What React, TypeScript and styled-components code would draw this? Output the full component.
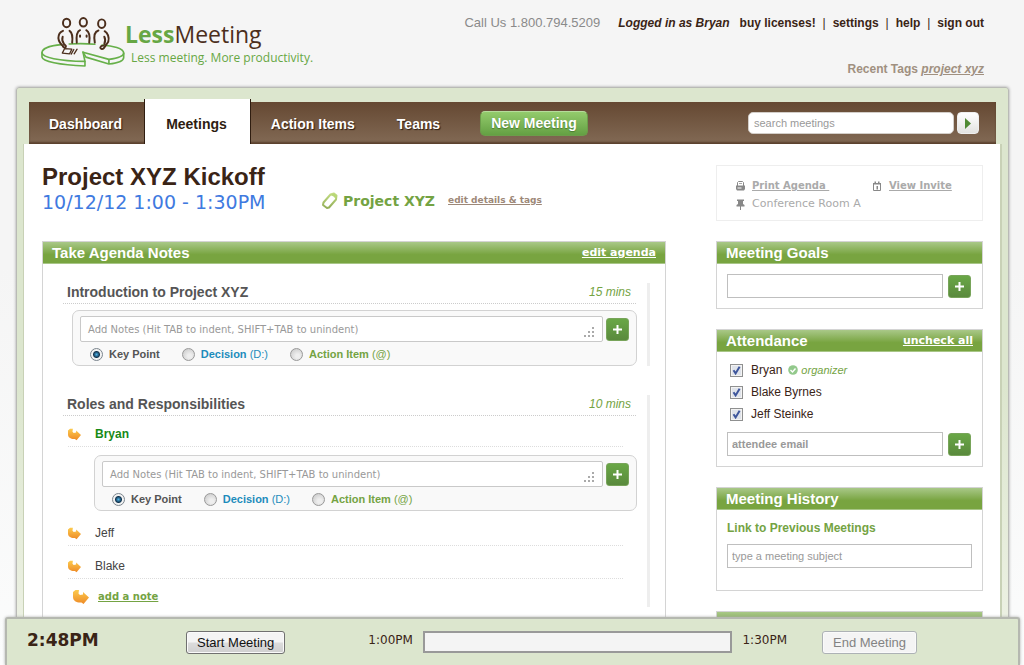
import React from "react";
import styled, { createGlobalStyle, css } from "styled-components";

const arial = `"Liberation Sans", Arial, sans-serif`;
const verdana = `"DejaVu Sans", Verdana, sans-serif`;

const GlobalStyle = createGlobalStyle`
  *, *::before, *::after { box-sizing: border-box; }
  body { margin: 0; background: #f5f5f5; font-family: ${arial}; font-size: 12px; color: #3a2416; }
  a { color: inherit; }
  input, textarea, button { font-family: inherit; margin: 0; }
  h1, h2, h3, p { margin: 0; padding: 0; }
`;

const Screen = styled.div`
  height: 100vh;
  display: flex;
  flex-direction: column;
  background: linear-gradient(#f5f5f5 40%, #fbfcfc);
`;

const Scroller = styled.div`
  flex: 1;
  min-height: 0;
  overflow-y: auto;
  scrollbar-width: none;
  padding: 0 15px 0 16px;
`;

/* ---------- header ---------- */

const Header = styled.header`
  display: flex;
  justify-content: space-between;
  height: 87px;
  padding: 15px 25px 0 25px;
`;

const Brand = styled.a`
  display: flex;
  height: 54px;
  text-decoration: none;
  font-family: "Open Sans", "Noto Sans", sans-serif;
`;

const BrandText = styled.div`
  padding-top: 3px;
`;

const BrandName = styled.div`
  font-size: 23px;
  font-weight: 500;
  line-height: 32px;
  color: #4b2e1c;
  b { color: #67a744; font-weight: 700; }
`;

const BrandTag = styled.div`
  padding-left: 6px;
  font-size: 12px;
  line-height: 16px;
  color: #67a744;
`;

const HeaderSide = styled.div`
  display: flex;
  flex-direction: column;
  align-items: flex-end;
  gap: 30px;
`;

const TopLinks = styled.div`
  display: flex;
  align-items: center;
  font-weight: bold;
  line-height: 16px;
  a { text-decoration: none; }
`;

const Phone = styled.span`
  margin-right: 18px;
  font-size: 13px;
  font-weight: normal;
  color: #8a8a8a;
`;

const LoggedIn = styled.em`
  margin-right: 10px;
`;

const Divider = styled.span`
  width: 17px;
  text-align: center;
  font-weight: normal;
`;

const RecentTags = styled.div`
  font-weight: bold;
  line-height: 16px;
  color: #a09080;
  a { font-style: italic; }
`;

/* ---------- frame and navigation ---------- */

const Frame = styled.div`
  border: 1px solid #b9bab6;
  border-radius: 3px 3px 0 0;
  box-shadow: 0 0 3px #999;
  padding: 14px 6px 0;
  background: linear-gradient(#dce6ce 50%, #f0f3e8 100%);
`;

const Nav = styled.nav`
  display: flex;
  align-items: center;
  height: 42px;
  margin: 0 6px;
  background: linear-gradient(#654832, #826a55);
  box-shadow: inset 0 -2px 2px #5a412d;
  font-size: 14px;
  font-weight: bold;
`;

const Tab = styled.a<{ $active?: boolean }>`
  padding: 2px 22px 0 20px;
  line-height: 42px;
  color: #fff;
  text-decoration: none;
  text-shadow: 1px 1px 1px #2f1d10;
  ${(p) =>
    p.$active &&
    css`
      align-self: flex-end;
      height: 45px;
      padding: 4px 23px 0 21px;
      border: solid #2f1d10;
      border-width: 0 1px;
      background: #fff;
      color: #2e1d12;
      text-shadow: none;
    `}
`;

const NewMeeting = styled.button`
  height: 25px;
  margin-left: 18px;
  padding: 0 10px;
  border: 1px solid #6c9d4b;
  border-top-color: #b5dc9b;
  border-radius: 5px;
  background: linear-gradient(#93cb6c, #64a043);
  color: #fff;
  font-size: 14px;
  font-weight: bold;
  text-shadow: 0 1px 1px #4c7a30;
`;

const SearchForm = styled.form`
  display: flex;
  align-items: center;
  gap: 3px;
  margin: 0 17px 0 auto;
`;

const SearchBox = styled.input`
  width: 206px;
  height: 22px;
  padding: 0 5px;
  border: 1px solid #d3cec9;
  border-radius: 5px;
  background: #fff;
  font-size: 11px;
  &::placeholder { color: #999; opacity: 1; }
`;

const SearchGo = styled.button`
  display: flex;
  align-items: center;
  justify-content: center;
  width: 22px;
  height: 22px;
  padding: 0;
  border: 1px solid #eee;
  border-radius: 4px;
  background: linear-gradient(#fff, #e2e2e0);
`;

/* ---------- page ---------- */

const Sheet = styled.main`
  display: flex;
  align-items: flex-start;
  gap: 50px;
  border: solid #c8d1b6;
  border-width: 0 2px 0 1px;
  padding: 21px 17px 30px 18px;
  background: #fff;
`;

const MainColumn = styled.div`
  flex: 1;
  min-width: 0;
`;

const SideColumn = styled.aside`
  display: flex;
  flex-direction: column;
  gap: 20px;
  width: 267px;
`;

const TitleRow = styled.div`
  display: flex;
  align-items: flex-end;
  margin-bottom: 26px;
`;

const TitleBlock = styled.div`
  width: 279px;
`;

const Title = styled.h1`
  font-size: 24px;
  font-weight: bold;
  line-height: 24px;
`;

const When = styled.p`
  font-family: ${verdana};
  font-size: 19px;
  line-height: 26px;
  color: #3f7ae0;
`;

const ProjectTag = styled.span`
  display: flex;
  align-items: center;
  gap: 5px;
  font-family: ${verdana};
  font-size: 14px;
  font-weight: bold;
  line-height: 28px;
  color: #74a343;
`;

const EditDetails = styled.a`
  margin-left: 13px;
  font-family: ${verdana};
  font-size: 9px;
  font-weight: bold;
  line-height: 30px;
  color: #9d8878;
`;

const InfoBox = styled.div`
  display: grid;
  grid-template-columns: 137px 1fr;
  align-content: start;
  padding: 11px 18px 7px;
  border: 1px solid #eee;
  font-family: ${verdana};
  font-size: 11px;
  line-height: 18px;
  color: #aaa;
  a { font-size: 10px; font-weight: bold; }
`;

const InfoItem = styled.div`
  display: flex;
  align-items: center;
  gap: 6px;
  white-space: pre;
`;

/* ---------- panels ---------- */

const PanelBox = styled.section`
  border: 1px solid #d4d4d4;
  background: #fff;
`;

const PanelHeader = styled.div`
  display: flex;
  justify-content: space-between;
  align-items: center;
  height: 22px;
  padding: 0 9px;
  border-bottom: 1px solid #a8c687;
  background: linear-gradient(#a9c888, #78a440 60%);
  color: #fff;
  h2 { font-size: 15px; font-weight: bold; }
  a { font-family: ${verdana}; font-size: 11px; font-weight: bold; }
`;

const Body = styled.div<{ $pad: string }>`
  padding: ${(p) => p.$pad};
`;

function Panel({ title, action, pad, children }: { title: string; action?: string; pad: string; children?: React.ReactNode }) {
  return (
    <PanelBox>
      <PanelHeader>
        <h2>{title}</h2>
        {action && <a href="#">{action}</a>}
      </PanelHeader>
      <Body $pad={pad}>{children}</Body>
    </PanelBox>
  );
}

const Agenda = styled.section`
  margin-bottom: 29px;
  padding-right: 10px;
  border-right: 3px solid #eee;
`;

const AgendaHead = styled.div`
  display: flex;
  justify-content: space-between;
  align-items: center;
  height: 21px;
  margin-right: 1px;
  padding: 0 5px 2px 4px;
  border-bottom: 1px dotted #ccc;
  h3 { font-size: 14px; font-weight: bold; color: #555; }
  em { color: #74a343; }
`;

const NoteForm = styled.form<{ $nested?: boolean }>`
  margin: ${(p) => (p.$nested ? "8px 0 3px 31px" : "6px 0 0 9px")};
  height: 56px;
  padding: 5px 7px;
  border: 1px solid #d2d2d2;
  border-radius: 7px;
  background: #f9f9f9;
`;

const NoteLine = styled.div`
  display: flex;
  align-items: center;
  gap: 3px;
`;

const NoteField = styled.div`
  position: relative;
  flex: 1;
  display: flex;
  svg { position: absolute; right: 8px; bottom: 4px; }
`;

const NoteText = styled.textarea`
  flex: 1;
  height: 26px;
  padding: 6px 7px;
  border: 1px solid #c9c9c9;
  border-radius: 2px;
  background: #fff;
  font-family: ${verdana};
  font-size: 10px;
  line-height: 13px;
  resize: none;
  overflow: hidden;
  &::placeholder { color: #999; opacity: 1; }
`;

const AddButton = styled.button`
  display: flex;
  align-items: center;
  justify-content: center;
  width: 23px;
  height: 23px;
  padding: 0;
  border: 1px solid #78a45a;
  border-radius: 3px;
  background: linear-gradient(#69a746, #5a8a3d);
`;

const Kinds = styled.div`
  display: flex;
  padding: 4px 0 0 10px;
`;

const Kind = styled.label<{ $color: string }>`
  display: flex;
  align-items: center;
  margin-right: 22px;
  font-size: 11px;
  font-weight: bold;
  line-height: 16px;
  color: ${(p) => p.$color};
  white-space: pre;
  span { font-weight: normal; }
`;

const Radio = styled.input`
  appearance: none;
  width: 13px;
  height: 13px;
  margin-right: 6px;
  border: 1px solid #999;
  border-radius: 50%;
  background: radial-gradient(circle at 60% 65%, #eee 20%, #c4c4c4);
  &:checked {
    border-color: #7b858d;
    background: radial-gradient(circle at 50% 50%, #4fb4e8 0, #12344f 3px, #f2f2f2 4px);
  }
`;

const NoteRow = styled.div`
  display: flex;
  align-items: center;
  gap: 14px;
  margin: 0 14px 0 5px;
  padding: 10px 0 4px;
  border-bottom: 1px dotted #ddd;
  line-height: 16px;
  & + & { padding-top: 12px; }
  form + & { padding-top: 11px; }
`;

const NoteName = styled.span<{ $current?: boolean }>`
  font-weight: ${(p) => (p.$current ? "bold" : "normal")};
  color: ${(p) => (p.$current ? "#178a17" : "#444")};
`;

const AddNote = styled.div`
  display: flex;
  align-items: center;
  gap: 9px;
  padding: 10px 0 2px 10px;
  line-height: 16px;
  a { font-family: ${verdana}; font-size: 10px; font-weight: bold; color: #74a343; }
`;

const FieldRow = styled.div`
  display: flex;
  align-items: center;
  gap: 5px;
`;

const Field = styled.input<{ $strong?: boolean }>`
  flex: 1;
  min-width: 0;
  height: 24px;
  padding: 0 4px;
  border: 1px solid #bfbfbf;
  background: #fff;
  font-size: 11px;
  font-weight: ${(p) => (p.$strong ? "bold" : "normal")};
  &::placeholder { color: #999; opacity: 1; }
`;

const Attendees = styled.div`
  margin-bottom: 7px;
`;

const Attendee = styled.label`
  display: flex;
  align-items: center;
  height: 22px;
  padding-left: 3px;
  em { margin-left: 3px; font-size: 11px; color: #74a343; }
  svg { margin-left: 6px; }
`;

const Check = styled.input`
  appearance: none;
  width: 13px;
  height: 13px;
  margin-right: 8px;
  border: 1px solid #8f9090;
  background: #dfe3ea;
  box-shadow: inset 0 0 0 1px #f3f3f3;
  &:checked {
    background: #dfe3ea
      url("data:image/svg+xml,%3Csvg xmlns='http://www.w3.org/2000/svg' viewBox='0 0 11 11'%3E%3Cpath d='M2.5 5.2 4.6 8.4 8.6 1.8' fill='none' stroke='%233e569c' stroke-width='2'/%3E%3C/svg%3E");
  }
`;

const LinkTitle = styled.h3`
  margin-bottom: 8px;
  font-size: 12px;
  font-weight: bold;
  line-height: 16px;
  color: #74a343;
`;

/* ---------- meeting bar ---------- */

const MeetingBar = styled.footer`
  position: relative;
  display: flex;
  align-items: center;
  height: 48px;
  margin: 0 4px 0 5px;
  padding: 0 101px 0 20px;
  border: solid #b5b8b0;
  border-width: 2px 2px 0;
  border-radius: 3px 3px 0 0;
  box-shadow: 0 0 3px #aaa;
  background: #dce6ce;
  font-family: ${verdana};
`;

const Clock = styled.strong`
  width: 159px;
  padding-bottom: 4px;
  font-size: 17px;
`;

const BarButton = styled.button`
  height: 23px;
  padding: 0 10px;
  border: 1px solid #707070;
  border-radius: 3px;
  background: linear-gradient(#f4f4f4 48%, #dcdcdc 52%, #cfcfcf);
  box-shadow: inset 0 0 0 1px #fafafa;
  font-family: ${arial};
  font-size: 13px;
  color: #111;
  &:disabled { border-color: #adb2b5; background: #f4f4f4; color: #838383; }
`;

const Timeline = styled.div`
  flex: 1;
  display: flex;
  align-items: center;
  gap: 10px;
  margin: 0 35px 0 83px;
  span { padding-bottom: 4px; }
`;

const Track = styled.div`
  flex: 1;
  height: 22px;
  border: 2px solid #999;
  background: #f4f4f4;
`;

/* ---------- drawings ---------- */

const LogoMark = () => (
  <svg width="84" height="54" viewBox="20 15 256 162" fill="none" strokeLinecap="round" strokeLinejoin="round" aria-hidden="true">
    <g stroke="#67b04a" strokeWidth="5">
      <path d="M82 104C48 107 23 116 23 129c0 14 52 25 131 26l-6-28 79 22c26-4 45-10 45-19 0-15-34-23-66-25M106 102c28-2 50-2 78 1" />
      <path d="M23 129v13c2 13 52 24 131 27v-13M148 127l9 15 70 21v-13M227 163c27-3 45-10 45-20v-13" />
    </g>
    <g stroke="#4b2e1c" strokeWidth="6">
      <ellipse cx="98" cy="38" rx="11" ry="13" />
      <ellipse cx="149" cy="36" rx="11" ry="13" />
      <ellipse cx="205" cy="40" rx="11" ry="13" />
      <path d="M87 62c-10 4-14 12-14 22 1 10 7 18 14 24M107 62c8 5 10 18 8 36M86 80c-3 8 0 16 4 22l5 5c3 5-3 8-8 3" />
      <path d="M139 60c-10 4-12 16-10 38M158 60c9 5 12 17 9 38M139 80v-4M159 80v-4" />
      <path d="M195 61c-11 3-15 15-11 37M214 63c9 5 15 18 11 32l-12 18c-4 7-13 5-12-1 1-3 5-5 9-5M213 80c4 8 3 16 0 22" />
      <path d="M92 116l22 2-7 14-22-2zM120 119l-8 14M130 118l-9 14" strokeWidth="4" />
    </g>
  </svg>
);

const TagIcon = () => (
  <svg width="17" height="18" viewBox="0 0 17 18" aria-hidden="true">
    <defs>
      <linearGradient id="tagStroke" x1="0" y1="0" x2="0" y2="1">
        <stop offset="0" stopColor="#c2dc82" />
        <stop offset="1" stopColor="#93ae58" />
      </linearGradient>
    </defs>
    <path d="M9.500 2.500 13 1.500 15.500 3.500 15 7.500 8 15.500 6 16 2 13 2.500 10.500z" fill="#fff" stroke="url(#tagStroke)" strokeWidth="2" strokeLinejoin="round" />
    <path d="M9.500 3 13 1.500 15.500 3.500 15 7 12.500 4.500z" fill="#b9d877" />
  </svg>
);

const ArrowIcon = ({ size }: { size: number }) => (
  <svg width={size} height={size} viewBox="0 0 16 16" aria-hidden="true">
    <defs>
      <linearGradient id="arrowFill" x1="0" y1="0" x2="0" y2="1">
        <stop offset="0" stopColor="#fccb4e" />
        <stop offset="1" stopColor="#ee8a26" />
      </linearGradient>
    </defs>
    <path d="M0 3 2.500 1 6 1 5.500 4.500 7 6 10 5.500V3L16 8.500 10.500 15 8.500 13.500C4 14 0 12 0 8z" fill="url(#arrowFill)" />
  </svg>
);

const PlusIcon = () => (
  <svg width="9" height="9" viewBox="0 0 9 9" aria-hidden="true">
    <path d="M4.500 0v9M0 4.500h9" stroke="#fff" strokeWidth="2" />
  </svg>
);

const GripIcon = () => (
  <svg width="11" height="11" viewBox="0 0 11 11" fill="#aaa" aria-hidden="true">
    <path d="M8 0h2v2H8zM4 4h2v2H4zM8 4h2v2H8zM0 8h2v2H0zM4 8h2v2H4zM8 8h2v2H8z" />
  </svg>
);

const PrintIcon = () => (
  <svg width="11" height="11" viewBox="0 0 11 11" aria-hidden="true">
    <path d="M2.500 5V1.500L3.500.500h4l1 1V5" fill="#fff" stroke="#888" />
    <path d="M4 2.500h3" stroke="#aaa" />
    <path d="M1 4.500h9V8L9 9.500H2L1 8z" fill="#888" />
    <path d="M2.500 7h4" stroke="#fff" />
  </svg>
);

const CalendarIcon = () => (
  <svg width="11" height="11" viewBox="0 0 11 11" aria-hidden="true">
    <path d="M1.500 2.500h7v7h-7z" fill="#fff" stroke="#888" />
    <path d="M1 2h8v1.500H1zM2.500.500h1.500v2H2.500zM6 .500h1.500v2H6zM4.500 5h1.500v3.500H4.500z" fill="#888" />
  </svg>
);

const PinIcon = () => (
  <svg width="11" height="11" viewBox="0 0 11 11" fill="#888" aria-hidden="true">
    <path d="M2 .500h7V2H8v3l1.500 1V7.500H6V11H5V7.500H1.500V6L3 5V2H2z" />
  </svg>
);

const OrganizerIcon = () => (
  <svg width="10" height="10" viewBox="0 0 10 10" aria-hidden="true">
    <circle cx="5" cy="5" r="4.800" fill="#93c98c" />
    <path d="M2.500 5l2 2 3-3.500" fill="none" stroke="#fff" strokeWidth="1.400" />
  </svg>
);

/* ---------- composed parts ---------- */

function NoteEditor({ name, nested }: { name: string; nested?: boolean }) {
  return (
    <NoteForm $nested={nested}>
      <NoteLine>
        <NoteField>
          <NoteText aria-label="Add notes" placeholder="Add Notes (Hit TAB to indent, SHIFT+TAB to unindent)" />
          <GripIcon />
        </NoteField>
        <AddButton type="button" aria-label="Add note"><PlusIcon /></AddButton>
      </NoteLine>
      <Kinds>
        <Kind $color="#555"><Radio type="radio" name={name} defaultChecked />Key Point</Kind>
        <Kind $color="#1d8cbc"><Radio type="radio" name={name} />Decision <span>(D:)</span></Kind>
        <Kind $color="#74a343"><Radio type="radio" name={name} />Action Item <span>(@)</span></Kind>
      </Kinds>
    </NoteForm>
  );
}

function Note({ name, current }: { name: string; current?: boolean }) {
  return (
    <NoteRow>
      <ArrowIcon size={13} />
      <NoteName $current={current}>{name}</NoteName>
    </NoteRow>
  );
}

export default function App() {
  return (
    <Screen>
      <GlobalStyle />
      <Scroller>
        <Header>
          <Brand href="#">
            <LogoMark />
            <BrandText>
              <BrandName><b>Less</b>Meeting</BrandName>
              <BrandTag>Less meeting. More productivity.</BrandTag>
            </BrandText>
          </Brand>
          <HeaderSide>
            <TopLinks>
              <Phone>Call Us 1.800.794.5209</Phone>
              <LoggedIn>Logged in as Bryan</LoggedIn>
              <a href="#">buy licenses!</a>
              <Divider>|</Divider>
              <a href="#">settings</a>
              <Divider>|</Divider>
              <a href="#">help</a>
              <Divider>|</Divider>
              <a href="#">sign out</a>
            </TopLinks>
            <RecentTags>Recent Tags <a href="#">project xyz</a></RecentTags>
          </HeaderSide>
        </Header>

        <Frame>
          <Nav>
            <Tab href="#">Dashboard</Tab>
            <Tab href="#" $active>Meetings</Tab>
            <Tab href="#">Action Items</Tab>
            <Tab href="#">Teams</Tab>
            <NewMeeting type="button">New Meeting</NewMeeting>
            <SearchForm>
              <SearchBox type="text" aria-label="Search meetings" placeholder="search meetings" />
              <SearchGo type="button" aria-label="Search">
                <svg width="6" height="11" viewBox="0 0 6 11" aria-hidden="true"><path d="M0 0l6 5.500L0 11z" fill="#4f8a33" /></svg>
              </SearchGo>
            </SearchForm>
          </Nav>

          <Sheet>
            <MainColumn>
              <TitleRow>
                <TitleBlock>
                  <Title>Project XYZ Kickoff</Title>
                  <When>10/12/12 1:00 - 1:30PM</When>
                </TitleBlock>
                <ProjectTag><TagIcon />Project XYZ</ProjectTag>
                <EditDetails href="#">edit details &amp; tags</EditDetails>
              </TitleRow>

              <Panel title="Take Agenda Notes" action="edit agenda" pad="19px 15px 0 20px">
                <Agenda>
                  <AgendaHead><h3>Introduction to Project XYZ</h3><em>15 mins</em></AgendaHead>
                  <NoteEditor name="intro" />
                </Agenda>
                <Agenda>
                  <AgendaHead><h3>Roles and Responsibilities</h3><em>10 mins</em></AgendaHead>
                  <Note name="Bryan" current />
                  <NoteEditor name="roles" nested />
                  <Note name="Jeff" />
                  <Note name="Blake" />
                  <AddNote><ArrowIcon size={16} /><a href="#">add a note</a></AddNote>
                </Agenda>
              </Panel>
            </MainColumn>

            <SideColumn>
              <InfoBox>
                <InfoItem><PrintIcon /><a href="#">Print Agenda </a></InfoItem>
                <InfoItem><CalendarIcon /><a href="#">View Invite</a></InfoItem>
                <InfoItem><PinIcon />Conference Room A</InfoItem>
              </InfoBox>
              <Panel title="Meeting Goals" pad="10px 11px 10px 10px">
                <FieldRow>
                  <Field type="text" aria-label="Meeting goal" />
                  <AddButton type="button" aria-label="Add goal"><PlusIcon /></AddButton>
                </FieldRow>
              </Panel>
              <Panel title="Attendance" action="uncheck all" pad="7px 11px 10px 10px">
                <Attendees>
                  <Attendee><Check type="checkbox" defaultChecked />Bryan<OrganizerIcon /><em>organizer</em></Attendee>
                  <Attendee><Check type="checkbox" defaultChecked />Blake Byrnes</Attendee>
                  <Attendee><Check type="checkbox" defaultChecked />Jeff Steinke</Attendee>
                </Attendees>
                <FieldRow>
                  <Field $strong type="email" aria-label="Attendee email" placeholder="attendee email" />
                  <AddButton type="button" aria-label="Add attendee"><PlusIcon /></AddButton>
                </FieldRow>
              </Panel>
              <Panel title="Meeting History" pad="10px 10px 22px">
                <LinkTitle>Link to Previous Meetings</LinkTitle>
                <FieldRow>
                  <Field type="text" aria-label="Meeting subject" placeholder="type a meeting subject" />
                </FieldRow>
              </Panel>
              <Panel title="" pad="9px" />
            </SideColumn>
          </Sheet>
        </Frame>
      </Scroller>

      <MeetingBar>
        <Clock>2:48PM</Clock>
        <BarButton type="button">Start Meeting</BarButton>
        <Timeline>
          <span>1:00PM</span>
          <Track />
          <span>1:30PM</span>
        </Timeline>
        <BarButton type="button" disabled>End Meeting</BarButton>
      </MeetingBar>
    </Screen>
  );
}
